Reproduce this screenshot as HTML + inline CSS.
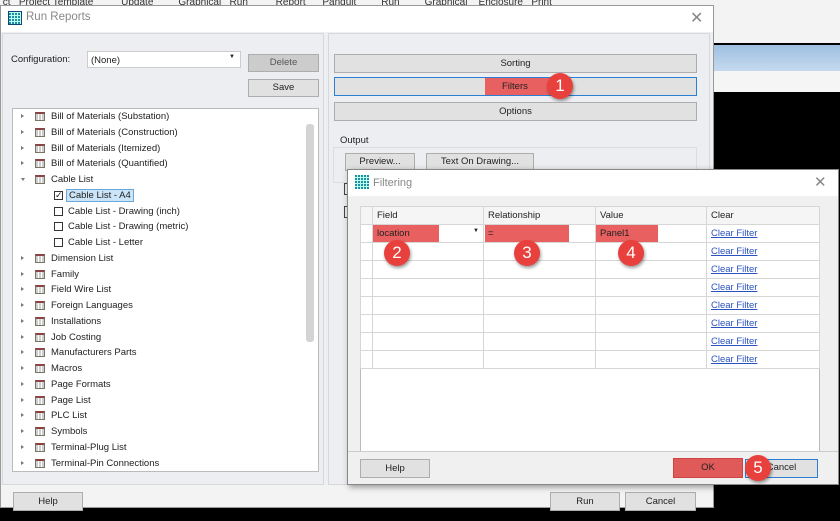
<!DOCTYPE html>
<html><head><style>
*{box-sizing:border-box;margin:0;padding:0}
body{width:840px;height:521px;position:relative;overflow:hidden;background:#000;font-family:"Liberation Sans",sans-serif;font-size:9.5px;color:#222}
.a{position:absolute}
.btn{position:absolute;background:#e1e1e1;border:1px solid #adadad;text-align:center;font-size:9.5px;color:#222}
.tree div{position:absolute;left:0;height:15px;line-height:15px;white-space:nowrap}
.arr{position:absolute;left:7px;top:5px;width:0;height:0;border-left:3px solid #777;border-top:2.5px solid transparent;border-bottom:2.5px solid transparent}
.ic{position:absolute;left:21px;top:3px;width:10px;height:9px;border:1px solid #776;border-top:2px solid #8a4444;background:repeating-linear-gradient(90deg,#ccc 0 2px,#fff 2px 3px)}
.cb{position:absolute;left:40px;top:3px;width:9px;height:9px;border:1px solid #333;background:#fff}
.circ{position:absolute;width:26px;height:26px;border-radius:50%;background:#e8403c;color:#fff;font-size:17px;text-align:center;line-height:26px;box-shadow:1px 2px 3px rgba(0,0,0,.4)}
.hl{position:absolute;background:#e86060}
.grid td{border:1px solid #d6d6d6;height:18px;padding:0 4px;font-size:9.5px}
.cf{color:#2a52be;text-decoration:underline}
</style></head><body>
<div class="a" style="left:0;top:0;width:840px;height:43px;background:#f3f3f3"></div>
<div class="a" style="left:0;top:0;width:840px;height:6px;font-size:10px;line-height:6px;overflow:hidden;color:#333;white-space:nowrap">&nbsp;ct&nbsp;&nbsp;&nbsp;Project&nbsp;Template&nbsp;&nbsp;&nbsp;&nbsp;&nbsp;&nbsp;&nbsp;&nbsp;&nbsp;&nbsp;Update&nbsp;&nbsp;&nbsp;&nbsp;&nbsp;&nbsp;&nbsp;&nbsp;&nbsp;Graphical&nbsp;&nbsp;&nbsp;Run&nbsp;&nbsp;&nbsp;&nbsp;&nbsp;&nbsp;&nbsp;&nbsp;&nbsp;&nbsp;Report&nbsp;&nbsp;&nbsp;&nbsp;&nbsp;&nbsp;Panduit&nbsp;&nbsp;&nbsp;&nbsp;&nbsp;&nbsp;&nbsp;&nbsp;&nbsp;Run&nbsp;&nbsp;&nbsp;&nbsp;&nbsp;&nbsp;&nbsp;&nbsp;&nbsp;Graphical&nbsp;&nbsp;&nbsp;&nbsp;Enclosure&nbsp;&nbsp;&nbsp;Print</div>
<div class="a" style="left:713px;top:45px;width:127px;height:26px;background:linear-gradient(#9dbfe0,#c5d9ee)"></div>
<div class="a" style="left:713px;top:71px;width:127px;height:21px;background:#f5f5f5"></div>

<div class="a" style="left:0;top:5px;width:714px;height:503px;background:#eeeff2;border:1px solid #999"></div>
<div class="a" style="left:1px;top:6px;width:712px;height:26px;background:#fff"></div>
<div class="a" style="left:8px;top:11px;width:14px;height:14px;background:#1e8fa0;border:1px solid #147;background-image:repeating-linear-gradient(90deg,transparent 0 2px,#bfe 2px 3px),repeating-linear-gradient(0deg,transparent 0 2px,#bfe 2px 3px)"></div>
<div class="a" style="left:26px;top:11px;font-size:11.5px;color:#888">Run Reports</div>
<div class="a" style="left:690px;top:8px;font-size:16px;color:#888">✕</div>
<div class="a" style="left:2px;top:33px;width:322px;height:452px;background:#eceef1;border:1px solid #d8d8d8"></div>
<div class="a" style="left:328px;top:33px;width:382px;height:452px;background:#eceef1;border:1px solid #d8d8d8"></div>
<div class="a" style="left:1px;top:485px;width:712px;height:22px;background:#f3f3f3"></div>
<div class="a" style="left:11px;top:54px;font-size:9.5px">Configuration:</div>
<div class="a" style="left:87px;top:51px;width:154px;height:17px;background:#fff;border:1px solid #ccc;padding:3px 3px;font-size:9.5px">(None)<span style="position:absolute;right:5px;top:2px;font-size:6px">▼</span></div>
<div class="btn" style="left:248px;top:54px;width:71px;height:18px;line-height:16px;background:#ccc;color:#555">Delete</div>
<div class="btn" style="left:248px;top:79px;width:71px;height:18px;line-height:16px">Save</div>
<div class="a" style="left:12px;top:108px;width:307px;height:364px;background:#fff;border:1px solid #bbb"></div>
<div class="a" style="left:306px;top:124px;width:8px;height:218px;background:#d4d4d4;border-radius:3px"></div>
<div class="a tree" style="left:14px;top:109px;width:290px;height:362px">
<div style="top:0"><span class="arr"></span><span class="ic"></span><span style="margin-left:37px">Bill of Materials (Substation)</span></div>
<div style="top:16px"><span class="arr"></span><span class="ic"></span><span style="margin-left:37px">Bill of Materials (Construction)</span></div>
<div style="top:32px"><span class="arr"></span><span class="ic"></span><span style="margin-left:37px">Bill of Materials (Itemized)</span></div>
<div style="top:47px"><span class="arr"></span><span class="ic"></span><span style="margin-left:37px">Bill of Materials (Quantified)</span></div>
<div style="top:63px"><span class="arr" style="border:0;border-top:3px solid #777;border-left:2.5px solid transparent;border-right:2.5px solid transparent;top:6px"></span><span class="ic"></span><span style="margin-left:37px">Cable List</span></div>
<div style="top:79px"><span class="cb" style="text-align:center;font-size:9px;line-height:7px">✓</span><span style="margin-left:52px;background:#cce4f7;border:1px solid #6aa8dc;padding:0 2px">Cable List - A4</span></div>
<div style="top:95px"><span class="cb"></span><span style="margin-left:54px">Cable List - Drawing (inch)</span></div>
<div style="top:110px"><span class="cb"></span><span style="margin-left:54px">Cable List - Drawing (metric)</span></div>
<div style="top:126px"><span class="cb"></span><span style="margin-left:54px">Cable List - Letter</span></div>
<div style="top:142px"><span class="arr"></span><span class="ic"></span><span style="margin-left:37px">Dimension List</span></div>
<div style="top:158px"><span class="arr"></span><span class="ic"></span><span style="margin-left:37px">Family</span></div>
<div style="top:173px"><span class="arr"></span><span class="ic"></span><span style="margin-left:37px">Field Wire List</span></div>
<div style="top:189px"><span class="arr"></span><span class="ic"></span><span style="margin-left:37px">Foreign Languages</span></div>
<div style="top:205px"><span class="arr"></span><span class="ic"></span><span style="margin-left:37px">Installations</span></div>
<div style="top:221px"><span class="arr"></span><span class="ic"></span><span style="margin-left:37px">Job Costing</span></div>
<div style="top:236px"><span class="arr"></span><span class="ic"></span><span style="margin-left:37px">Manufacturers Parts</span></div>
<div style="top:252px"><span class="arr"></span><span class="ic"></span><span style="margin-left:37px">Macros</span></div>
<div style="top:268px"><span class="arr"></span><span class="ic"></span><span style="margin-left:37px">Page Formats</span></div>
<div style="top:284px"><span class="arr"></span><span class="ic"></span><span style="margin-left:37px">Page List</span></div>
<div style="top:299px"><span class="arr"></span><span class="ic"></span><span style="margin-left:37px">PLC List</span></div>
<div style="top:315px"><span class="arr"></span><span class="ic"></span><span style="margin-left:37px">Symbols</span></div>
<div style="top:331px"><span class="arr"></span><span class="ic"></span><span style="margin-left:37px">Terminal-Plug List</span></div>
<div style="top:347px"><span class="arr"></span><span class="ic"></span><span style="margin-left:37px">Terminal-Pin Connections</span></div>
</div>
<div class="btn" style="left:13px;top:492px;width:70px;height:19px;line-height:17px">Help</div>
<div class="btn" style="left:550px;top:492px;width:70px;height:19px;line-height:17px">Run</div>
<div class="btn" style="left:625px;top:492px;width:71px;height:19px;line-height:17px">Cancel</div>
<div class="btn" style="left:334px;top:54px;width:363px;height:19px;line-height:17px">Sorting</div>
<div class="btn" style="left:334px;top:77px;width:363px;height:19px;line-height:16px;border:1.5px solid #2a7fd4"></div>
<div class="hl" style="left:485px;top:78px;width:67px;height:17px"></div>
<div class="a" style="left:502px;top:81px;font-size:9.5px">Filters</div>
<div class="circ" style="left:547px;top:73px">1</div>
<div class="btn" style="left:334px;top:102px;width:363px;height:19px;line-height:17px">Options</div>
<div class="a" style="left:333px;top:147px;width:364px;height:36px;border:1px solid #ddd"></div>
<div class="a" style="left:338px;top:135px;background:#eceef1;padding:0 2px">Output</div>
<div class="btn" style="left:345px;top:153px;width:70px;height:18px;line-height:16px">Preview...</div>
<div class="btn" style="left:426px;top:153px;width:108px;height:18px;line-height:16px">Text On Drawing...</div>
<div class="a" style="left:344px;top:183px;width:5px;height:12px;border:1px solid #444;border-right:0"></div>
<div class="a" style="left:344px;top:206px;width:5px;height:12px;border:1px solid #444;border-right:0"></div>

<div class="a" style="left:347px;top:169px;width:492px;height:316px;background:#f0f0f0;border:1px solid #888;box-shadow:2px 2px 6px rgba(0,0,0,.4)"></div>
<div class="a" style="left:348px;top:170px;width:490px;height:26px;background:#fff"></div>
<div class="a" style="left:355px;top:175px;width:14px;height:14px;background:#1e8fa0;background-image:repeating-linear-gradient(90deg,transparent 0 2px,#bfe 2px 3px),repeating-linear-gradient(0deg,transparent 0 2px,#bfe 2px 3px)"></div>
<div class="a" style="left:373px;top:177px;font-size:11px;color:#888">Filtering</div>
<div class="a" style="left:814px;top:173px;font-size:15px;color:#888">✕</div>
<div class="a" style="left:348px;top:196px;width:490px;height:256px;background:#f0f0f0"></div>
<div class="a" style="left:360px;top:206px;width:460px;height:246px;background:#fff;border:1px solid #bbb"></div>
<div class="hl" style="left:373px;top:225px;width:66px;height:17px"></div>
<div class="hl" style="left:485px;top:225px;width:84px;height:17px"></div>
<div class="hl" style="left:596px;top:225px;width:62px;height:17px"></div>
<table class="a grid" style="left:360px;top:206px;border-collapse:collapse;width:460px">
<tr style="background:#f5f5f5"><td style="width:12px"></td><td style="width:111px">Field</td><td style="width:112px">Relationship</td><td style="width:111px">Value</td><td>Clear</td></tr>
<tr><td></td><td>location<span style="float:right;font-size:6px">▼</span></td><td>=</td><td>Panel1</td><td class="cf">Clear Filter</td></tr>
<tr><td></td><td></td><td></td><td></td><td class="cf">Clear Filter</td></tr>
<tr><td></td><td></td><td></td><td></td><td class="cf">Clear Filter</td></tr>
<tr><td></td><td></td><td></td><td></td><td class="cf">Clear Filter</td></tr>
<tr><td></td><td></td><td></td><td></td><td class="cf">Clear Filter</td></tr>
<tr><td></td><td></td><td></td><td></td><td class="cf">Clear Filter</td></tr>
<tr><td></td><td></td><td></td><td></td><td class="cf">Clear Filter</td></tr>
<tr><td></td><td></td><td></td><td></td><td class="cf">Clear Filter</td></tr>
</table>
<div class="circ" style="left:384px;top:240px">2</div>
<div class="circ" style="left:514px;top:240px">3</div>
<div class="circ" style="left:618px;top:240px">4</div>
<div class="a" style="left:348px;top:451px;width:490px;height:1px;background:#ccc"></div>
<div class="btn" style="left:360px;top:459px;width:70px;height:19px;line-height:17px">Help</div>
<div class="btn" style="left:745px;top:459px;width:73px;height:19px;line-height:16px;border:1.5px solid #2a7fd4">Cancel</div>
<div class="btn" style="left:673px;top:458px;width:70px;height:20px;line-height:18px;background:#e05a5a;border-color:#c44">OK</div>
<div class="circ" style="left:745px;top:455px">5</div>
</body></html>
